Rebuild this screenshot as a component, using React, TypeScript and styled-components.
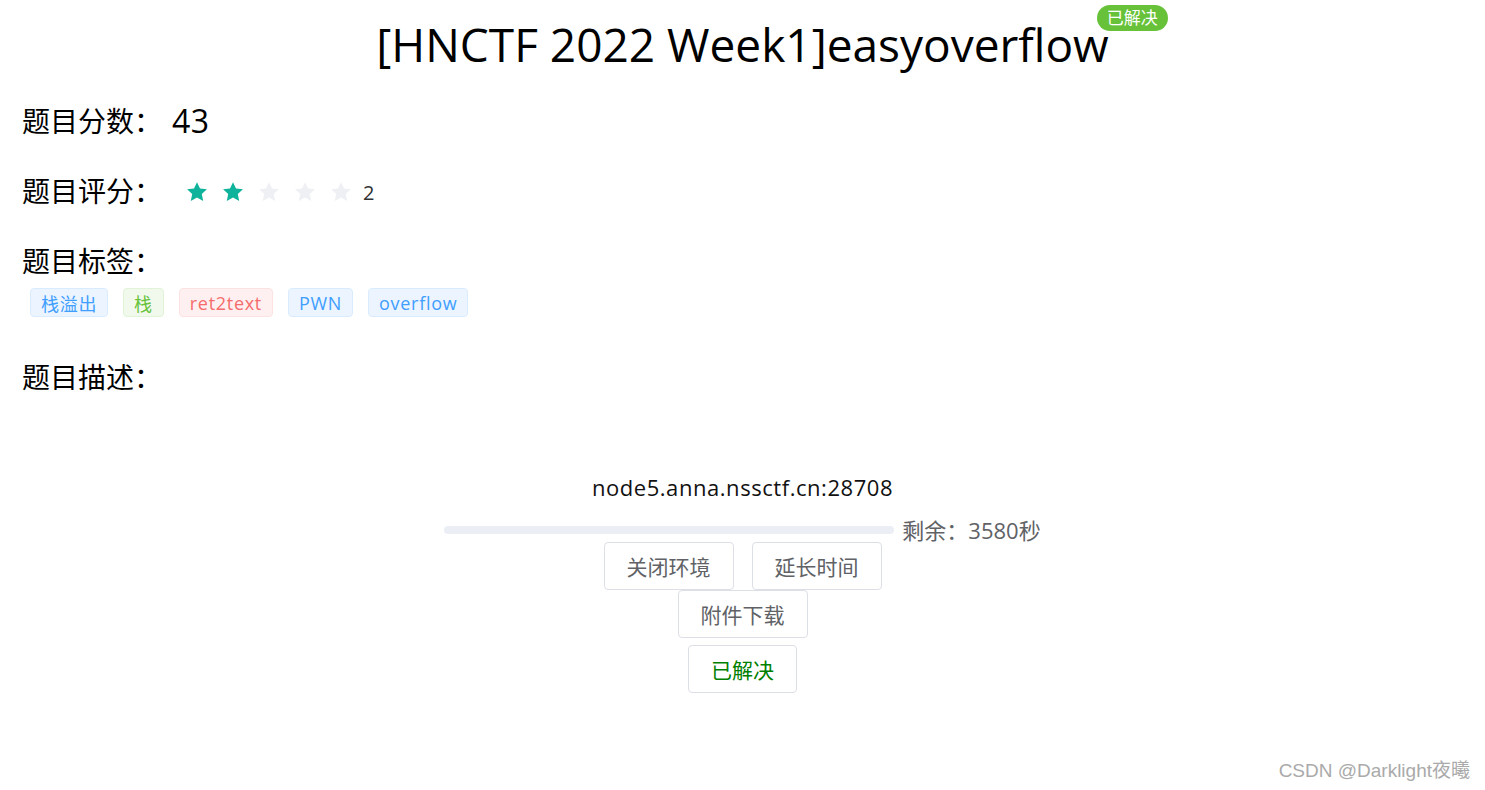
import React from 'react'
import styled, { createGlobalStyle } from 'styled-components'

const GlobalStyle = createGlobalStyle`
  html, body {
    margin: 0;
    padding: 0;
    background: #fff;
  }
  body {
    font-family: "Open Sans", "Noto Sans CJK SC", sans-serif;
    color: #000;
  }
`

type TagKind = 'primary' | 'success' | 'danger'

const tagColors: Record<TagKind, { bg: string; border: string; fg: string }> = {
  primary: { bg: '#ecf5ff', border: '#d9ecff', fg: '#409eff' },
  success: { bg: '#f0f9eb', border: '#e1f3d8', fg: '#67c23a' },
  danger: { bg: '#fef0f0', border: '#fde2e2', fg: '#f56c6c' },
}

const tags: { label: string; kind: TagKind }[] = [
  { label: '栈溢出', kind: 'primary' },
  { label: '栈', kind: 'success' },
  { label: 'ret2text', kind: 'danger' },
  { label: 'PWN', kind: 'primary' },
  { label: 'overflow', kind: 'primary' },
]

const Star = ({ on }: { on: boolean }) => (
  <StarBox viewBox="0 0 24 24" $on={on}>
    <path d="M12 2.2l3 6.3 6.9.8-5.1 4.8 1.4 6.9L12 17.6 5.8 21l1.4-6.9-5.1-4.8 6.9-.8z" />
  </StarBox>
)

const App = () => {
  return (
    <Page>
      <GlobalStyle />
      <TitleRow>
        <Title>
          [HNCTF 2022 Week1]easyoverflow
          <SolvedBadge>已解决</SolvedBadge>
        </Title>
      </TitleRow>

      <Field>
        <Label>题目分数：</Label>
        <Score>43</Score>
      </Field>

      <Field>
        <Label>题目评分：</Label>
        <Rating>
          {[1, 2, 3, 4, 5].map((n) => (
            <Star key={n} on={n <= 2} />
          ))}
          <RateText>2</RateText>
        </Rating>
      </Field>

      <Section $top={30}>
        <Label>题目标签：</Label>
        <TagList>
          {tags.map((t) => (
            <Tag key={t.label} $kind={t.kind}>
              {t.label}
            </Tag>
          ))}
        </TagList>
      </Section>

      <Section $top={39}>
        <Label>题目描述：</Label>
      </Section>

      <EnvPanel>
        <Address>node5.anna.nssctf.cn:28708</Address>
        <TimerRow>
          <Progress />
          <Remain>剩余：3580秒</Remain>
        </TimerRow>
        <ButtonRow>
          <Button>关闭环境</Button>
          <Button>延长时间</Button>
        </ButtonRow>
        <ButtonRow>
          <Button>附件下载</Button>
        </ButtonRow>
        <ButtonRow $top={7}>
          <Button $done>已解决</Button>
        </ButtonRow>
      </EnvPanel>

      <Watermark>CSDN @Darklight夜曦</Watermark>
    </Page>
  )
}

export default App

const Page = styled.div`
  position: relative;
  width: 1485px;
  height: 790px;
  box-sizing: border-box;
  padding: 0 22px;
  overflow: hidden;
`

const TitleRow = styled.div`
  display: flex;
  justify-content: center;
  padding-top: 17px;
`

const Title = styled.h1`
  position: relative;
  margin: 0;
  font-size: 46px;
  font-weight: 400;
  line-height: 54px;
  white-space: nowrap;
`

const SolvedBadge = styled.span`
  position: absolute;
  top: -12px;
  right: -59px;
  height: 26px;
  padding: 0 10px;
  border-radius: 13px;
  background: #67c23a;
  color: #fff;
  font-size: 17px;
  line-height: 26px;
`

const Field = styled.div`
  display: flex;
  align-items: center;
  height: 40px;
  margin-top: 30px;
`

const Label = styled.div`
  font-size: 28px;
  line-height: 40px;
  white-space: nowrap;
`

const Score = styled.span`
  font-size: 32px;
  line-height: 40px;
  margin-left: 10px;
  letter-spacing: 0.5px;
`

const Rating = styled.div`
  display: flex;
  align-items: center;
  margin-left: 23px;
  margin-top: 2px;
`

const StarBox = styled.svg<{ $on: boolean }>`
  width: 24px;
  height: 24px;
  margin-right: 12px;
  fill: ${(p) => (p.$on ? '#0fb29a' : '#eef0f4')};
`

const RateText = styled.span`
  margin-left: -2px;
  font-size: 20px;
  color: #303133;
`

const Section = styled.div<{ $top: number }>`
  margin-top: ${(p) => p.$top}px;
`

const TagList = styled.div`
  display: flex;
  gap: 15px;
  margin: 7px 0 0 8px;
  height: 30px;
`

const Tag = styled.span<{ $kind: TagKind }>`
  display: inline-flex;
  align-items: center;
  height: 29px;
  box-sizing: border-box;
  padding: 0 10px;
  border-radius: 4px;
  font-size: 18px;
  letter-spacing: 0.7px;
  background: ${(p) => tagColors[p.$kind].bg};
  border: 1px solid ${(p) => tagColors[p.$kind].border};
  color: ${(p) => tagColors[p.$kind].fg};
`

const EnvPanel = styled.div`
  display: flex;
  flex-direction: column;
  align-items: center;
  margin-top: 75px;
`

const Address = styled.div`
  font-size: 22px;
  line-height: 30px;
  letter-spacing: 0.55px;
  color: #111;
`

const TimerRow = styled.div`
  display: flex;
  align-items: center;
  gap: 8px;
  height: 24px;
  margin-top: 16px;
`

const Progress = styled.div`
  width: 450px;
  height: 8px;
  border-radius: 4px;
  background: #ebeef5;
`

const Remain = styled.span`
  font-size: 22px;
  line-height: 24px;
  color: #606266;
`

const ButtonRow = styled.div<{ $top?: number }>`
  display: flex;
  gap: 18px;
  margin-top: ${(p) => p.$top ?? 0}px;
`

const Button = styled.button<{ $done?: boolean }>`
  height: 48px;
  padding: 0 22px;
  background: #fff;
  border: 1px solid #dcdfe6;
  border-radius: 4px;
  font-family: "Open Sans", "Noto Sans CJK SC", sans-serif;
  font-size: 21px;
  color: ${(p) => (p.$done ? '#008000' : '#606266')};
`

const Watermark = styled.div`
  position: absolute;
  right: 15px;
  bottom: 8px;
  font-family: "Liberation Sans", "Noto Sans CJK SC", sans-serif;
  font-size: 19px;
  color: #aaa;
`
